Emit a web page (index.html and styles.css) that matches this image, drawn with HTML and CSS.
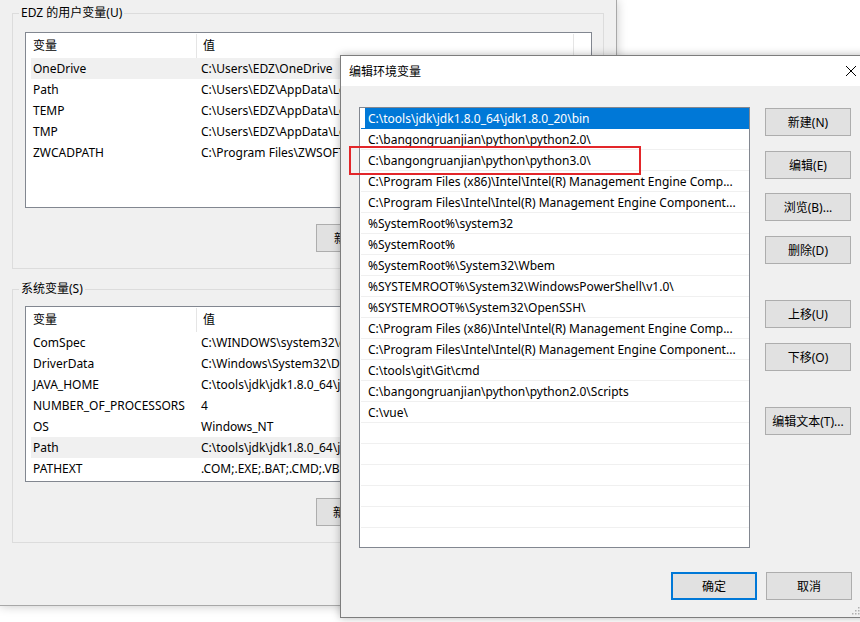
FILE: index.html
```html
<!DOCTYPE html>
<html lang="zh-CN">
<head>
<meta charset="utf-8">
<title>编辑环境变量</title>
<link rel="stylesheet" href="styles.css">
</head>
<body>
<div class="desk">
  <div class="win">
    <fieldset class="group">
      <legend>EDZ 的用户变量(U)</legend>
      <div class="lv">
        <div class="lv-head"><span class="c1">变量</span><span class="c2">值</span><span class="c3"></span></div>
        <div class="lv-row hl"><span class="c1">OneDrive</span><span class="c2">C:\Users\EDZ\OneDrive</span></div>
        <div class="lv-row"><span class="c1">Path</span><span class="c2">C:\Users\EDZ\AppData\Local\Microsoft\WindowsApps;</span></div>
        <div class="lv-row"><span class="c1">TEMP</span><span class="c2">C:\Users\EDZ\AppData\Local\Temp</span></div>
        <div class="lv-row"><span class="c1">TMP</span><span class="c2">C:\Users\EDZ\AppData\Local\Temp</span></div>
        <div class="lv-row"><span class="c1">ZWCADPATH</span><span class="c2">C:\Program Files\ZWSOFT\ZWCAD</span></div>
      </div>
      <div class="g-btns"><button class="btn">新建(N)...</button></div>
    </fieldset>
    <fieldset class="group g-sys">
      <legend>系统变量(S)</legend>
      <div class="lv">
        <div class="lv-head"><span class="c1">变量</span><span class="c2">值</span><span class="c3"></span></div>
        <div class="lv-row"><span class="c1">ComSpec</span><span class="c2">C:\WINDOWS\system32\cmd.exe</span></div>
        <div class="lv-row"><span class="c1">DriverData</span><span class="c2">C:\Windows\System32\Drivers\DriverData</span></div>
        <div class="lv-row"><span class="c1">JAVA_HOME</span><span class="c2">C:\tools\jdk\jdk1.8.0_64\jdk1.8.0_20</span></div>
        <div class="lv-row"><span class="c1">NUMBER_OF_PROCESSORS</span><span class="c2">4</span></div>
        <div class="lv-row"><span class="c1">OS</span><span class="c2">Windows_NT</span></div>
        <div class="lv-row hl"><span class="c1">Path</span><span class="c2">C:\tools\jdk\jdk1.8.0_64\jdk1.8.0_20\bin</span></div>
        <div class="lv-row"><span class="c1">PATHEXT</span><span class="c2">.COM;.EXE;.BAT;.CMD;.VBS;.VBE;.JS</span></div>
      </div>
      <div class="g-btns"><button class="btn">新建(W)...</button></div>
    </fieldset>
  </div>

  <div class="dlg">
    <div class="dlg-title">
      <span class="dlg-caption">编辑环境变量</span>
      <svg class="dlg-close" width="12" height="12" viewBox="0 0 12 12"><path d="M1 1 L11 11 M11 1 L1 11" stroke="#000" stroke-width="1" fill="none"/></svg>
    </div>
    <div class="dlg-body">
      <div class="dlg-main">
        <div class="plist">
          <div class="prow sel"><span class="ptxt">C:\tools\jdk\jdk1.8.0_64\jdk1.8.0_20\bin</span></div>
          <div class="prow"><span class="ptxt">C:\bangongruanjian\python\python2.0\</span></div>
          <div class="prow"><span class="ptxt">C:\bangongruanjian\python\python3.0\</span></div>
          <div class="prow"><span class="ptxt">C:\Program Files (x86)\Intel\Intel(R) Management Engine Comp...</span></div>
          <div class="prow"><span class="ptxt">C:\Program Files\Intel\Intel(R) Management Engine Component...</span></div>
          <div class="prow"><span class="ptxt">%SystemRoot%\system32</span></div>
          <div class="prow"><span class="ptxt">%SystemRoot%</span></div>
          <div class="prow"><span class="ptxt">%SystemRoot%\System32\Wbem</span></div>
          <div class="prow"><span class="ptxt">%SYSTEMROOT%\System32\WindowsPowerShell\v1.0\</span></div>
          <div class="prow"><span class="ptxt">%SYSTEMROOT%\System32\OpenSSH\</span></div>
          <div class="prow"><span class="ptxt">C:\Program Files (x86)\Intel\Intel(R) Management Engine Comp...</span></div>
          <div class="prow"><span class="ptxt">C:\Program Files\Intel\Intel(R) Management Engine Component...</span></div>
          <div class="prow"><span class="ptxt">C:\tools\git\Git\cmd</span></div>
          <div class="prow"><span class="ptxt">C:\bangongruanjian\python\python2.0\Scripts</span></div>
          <div class="prow"><span class="ptxt">C:\vue\</span></div>
          <div class="prow"><span class="ptxt"></span></div>
          <div class="prow"><span class="ptxt"></span></div>
          <div class="prow"><span class="ptxt"></span></div>
          <div class="prow"><span class="ptxt"></span></div>
          <div class="prow"><span class="ptxt"></span></div>
          <div class="prow"><span class="ptxt"></span></div>
        </div>
        <div class="side">
          <button class="btn">新建(N)</button>
          <button class="btn">编辑(E)</button>
          <button class="btn">浏览(B)...</button>
          <button class="btn">删除(D)</button>
          <button class="btn sep">上移(U)</button>
          <button class="btn">下移(O)</button>
          <button class="btn sep">编辑文本(T)...</button>
        </div>
      </div>
      <div class="dlg-foot">
        <button class="btn def">确定</button>
        <button class="btn">取消</button>
      </div>
    </div>
  </div>

  <div class="mark"></div>
  <svg class="grip" width="8" height="8" viewBox="0 0 8 8"><rect x="6" y="0" width="1.5" height="1.5" fill="#b0b0b0"/><rect x="3" y="3" width="1.5" height="1.5" fill="#b0b0b0"/><rect x="6" y="3" width="1.5" height="1.5" fill="#b0b0b0"/><rect x="0" y="6" width="1.5" height="1.5" fill="#b0b0b0"/><rect x="3" y="6" width="1.5" height="1.5" fill="#b0b0b0"/><rect x="6" y="6" width="1.5" height="1.5" fill="#b0b0b0"/></svg>
</div>
</body>
</html>
```

FILE: styles.css
```css
html, body {
  margin: 0;
  padding: 0;
  width: 860px;
  height: 622px;
  overflow: hidden;
  background: #ffffff;
}

.desk {
  position: relative;
  width: 860px;
  height: 622px;
  overflow: hidden;
  font-family: "Noto Sans", "Noto Sans CJK SC", sans-serif;
  font-size: 12px;
  color: #000;
}

/* left (background) window */
.win {
  position: absolute;
  left: 0;
  top: 0;
  width: 617px;
  height: 606px;
  box-sizing: border-box;
  background: #f0f0f0;
  border-right: 1px solid #a8a8a8;
  border-bottom: 1px solid #a8a8a8;
  box-shadow: 0 0 10px rgba(0, 0, 0, 0.22);
  padding: 5px 0 0 12px;
}

.group {
  margin: 0;
  width: 592px;
  box-sizing: border-box;
  border: 1px solid #dcdcdc;
  padding: 11px 11px 16px 12px;
}
.group.g-sys {
  margin-top: 12px;
  padding-top: 9px;
}
.group legend {
  padding: 0 2px;
  margin-left: -6px;
  line-height: 16px;
  height: 16px;
}

.lv {
  height: 176px;
  box-sizing: border-box;
  border: 1px solid #828790;
  background: #fff;
  overflow: hidden;
}
.lv-head {
  display: flex;
  height: 25px;
  box-sizing: border-box;
  padding-top: 1px;
  line-height: 24px;
}
.lv-head .c1 {
  width: 163px;
  padding-left: 7px;
  border-right: 1px solid #e5e5e5;
  flex: none;
}
.lv-head .c2 {
  width: 370px;
  padding-left: 6px;
  border-right: 1px solid #e5e5e5;
  flex: none;
}
.lv-row {
  display: flex;
  height: 21px;
  line-height: 21px;
  margin-left: 5px;
  white-space: nowrap;
}
.lv-row.hl {
  background: #f0f0f0;
}
.lv-row .c1 {
  width: 164px;
  padding-left: 2px;
  flex: none;
  box-sizing: border-box;
}
.lv-row .c2 {
  padding-left: 6px;
}

.g-btns {
  display: flex;
  padding-left: 291px;
  margin-top: 16px;
}

.btn {
  font-family: "Noto Sans", "Noto Sans CJK SC", sans-serif;
  font-size: 12px;
  color: #000;
  background: #e1e1e1;
  border: 1px solid #adadad;
  width: 86px;
  height: 28px;
  padding: 0;
  margin: 0;
  white-space: nowrap;
  box-sizing: border-box;
}

/* dialog */
.dlg {
  position: absolute;
  left: 340px;
  top: 55px;
  width: 534px;
  height: 563px;
  box-sizing: border-box;
  border: 1px solid #7d7d7d;
  background: #f0f0f0;
  box-shadow: 0 0 8px rgba(0, 0, 0, 0.28);
  display: flex;
  flex-direction: column;
}
.dlg-title {
  height: 30px;
  background: #fff;
  display: flex;
  align-items: center;
  justify-content: space-between;
  padding: 0 16px 0 8px;
  flex: none;
}
.dlg-caption {
  font-size: 12px;
}
.dlg-close {
  display: block;
}
.dlg-body {
  padding: 21px 21px 0 18px;
}
.dlg-main {
  display: flex;
  gap: 15px;
}
.plist {
  width: 391px;
  height: 441px;
  box-sizing: border-box;
  border: 1px solid #828790;
  background: #fff;
  overflow: hidden;
  flex: none;
}
.prow {
  height: 21px;
  box-sizing: border-box;
  border-bottom: 1px solid #f0f0f0;
  margin-left: 1px;
  display: flex;
}
.ptxt {
  display: block;
  flex: 1;
  height: 20px;
  box-sizing: border-box;
  margin-left: 4px;
  padding: 1px 0 0 3px;
  line-height: 19px;
  white-space: nowrap;
  overflow: hidden;
}
.prow.sel {
  border-bottom-color: #0078d7;
}
.prow.sel .ptxt {
  background: #0078d7;
  color: #fff;
  height: 21px;
  margin-bottom: -1px;
}
.side {
  display: flex;
  flex-direction: column;
  gap: 14.5px;
  padding-top: 1px;
}
.side .sep {
  margin-top: 22px;
}
.dlg-foot {
  display: flex;
  justify-content: flex-end;
  gap: 9px;
  margin-top: 24px;
}
.btn.def {
  border: 2px solid #0078d7;
}

/* annotation */
.mark {
  position: absolute;
  left: 349px;
  top: 146px;
  width: 292px;
  height: 29px;
  box-sizing: border-box;
  border: 2px solid #e3262a;
}
.grip {
  position: absolute;
  left: 852px;
  top: 607px;
}
```
